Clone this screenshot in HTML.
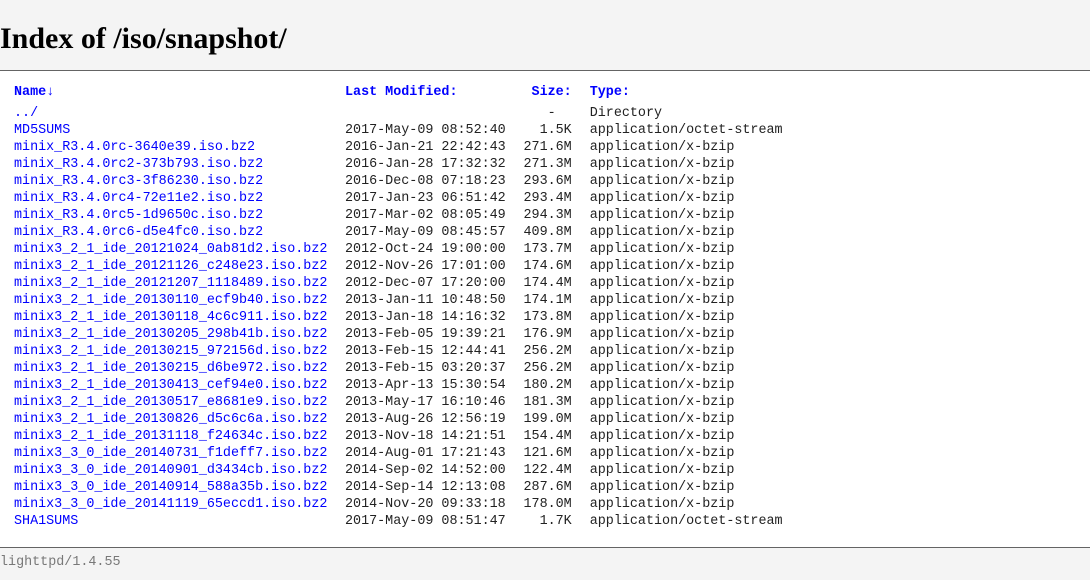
<!DOCTYPE html>
<html><head><meta charset="utf-8"><style>
html,body{margin:0;padding:0;background:#f4f4f4;width:1090px;height:580px;overflow:hidden}
h1{position:absolute;left:0;top:19px;margin:0;font:bold 30px/40px "Liberation Serif",serif;color:#000;white-space:nowrap}
.list{position:absolute;left:0;top:70px;width:1090px;height:476px;background:#fff;border-top:1px solid #646464;border-bottom:1px solid #646464}
table{position:absolute;left:14px;top:13px;border-collapse:collapse}
th,td{font:13.4px/17px "Liberation Mono",monospace;padding:0;text-align:left;white-space:nowrap;color:#222}
th{font-weight:bold;color:blue;padding-bottom:4px}
a{color:blue;text-decoration:none}
.n{width:331px}.m{width:160px}.s{width:66px;text-align:right}.t{padding-left:18px}
.foot{position:absolute;left:0;top:554px;font:13.4px/17px "Liberation Mono",monospace;color:#787878}
</style></head><body>
<h1>Index of /iso/snapshot/</h1>
<div class="list"><table>
<tr><th class="n">Name↓</th><th class="m">Last Modified:</th><th class="s">Size:</th><th class="t">Type:</th></tr>
<tr><td class="n"><a>../</a></td><td class="m"></td><td class="s">-&nbsp;&nbsp;</td><td class="t">Directory</td></tr>
<tr><td class="n"><a>MD5SUMS</a></td><td class="m">2017-May-09 08:52:40</td><td class="s">1.5K</td><td class="t">application/octet-stream</td></tr>
<tr><td class="n"><a>minix_R3.4.0rc-3640e39.iso.bz2</a></td><td class="m">2016-Jan-21 22:42:43</td><td class="s">271.6M</td><td class="t">application/x-bzip</td></tr>
<tr><td class="n"><a>minix_R3.4.0rc2-373b793.iso.bz2</a></td><td class="m">2016-Jan-28 17:32:32</td><td class="s">271.3M</td><td class="t">application/x-bzip</td></tr>
<tr><td class="n"><a>minix_R3.4.0rc3-3f86230.iso.bz2</a></td><td class="m">2016-Dec-08 07:18:23</td><td class="s">293.6M</td><td class="t">application/x-bzip</td></tr>
<tr><td class="n"><a>minix_R3.4.0rc4-72e11e2.iso.bz2</a></td><td class="m">2017-Jan-23 06:51:42</td><td class="s">293.4M</td><td class="t">application/x-bzip</td></tr>
<tr><td class="n"><a>minix_R3.4.0rc5-1d9650c.iso.bz2</a></td><td class="m">2017-Mar-02 08:05:49</td><td class="s">294.3M</td><td class="t">application/x-bzip</td></tr>
<tr><td class="n"><a>minix_R3.4.0rc6-d5e4fc0.iso.bz2</a></td><td class="m">2017-May-09 08:45:57</td><td class="s">409.8M</td><td class="t">application/x-bzip</td></tr>
<tr><td class="n"><a>minix3_2_1_ide_20121024_0ab81d2.iso.bz2</a></td><td class="m">2012-Oct-24 19:00:00</td><td class="s">173.7M</td><td class="t">application/x-bzip</td></tr>
<tr><td class="n"><a>minix3_2_1_ide_20121126_c248e23.iso.bz2</a></td><td class="m">2012-Nov-26 17:01:00</td><td class="s">174.6M</td><td class="t">application/x-bzip</td></tr>
<tr><td class="n"><a>minix3_2_1_ide_20121207_1118489.iso.bz2</a></td><td class="m">2012-Dec-07 17:20:00</td><td class="s">174.4M</td><td class="t">application/x-bzip</td></tr>
<tr><td class="n"><a>minix3_2_1_ide_20130110_ecf9b40.iso.bz2</a></td><td class="m">2013-Jan-11 10:48:50</td><td class="s">174.1M</td><td class="t">application/x-bzip</td></tr>
<tr><td class="n"><a>minix3_2_1_ide_20130118_4c6c911.iso.bz2</a></td><td class="m">2013-Jan-18 14:16:32</td><td class="s">173.8M</td><td class="t">application/x-bzip</td></tr>
<tr><td class="n"><a>minix3_2_1_ide_20130205_298b41b.iso.bz2</a></td><td class="m">2013-Feb-05 19:39:21</td><td class="s">176.9M</td><td class="t">application/x-bzip</td></tr>
<tr><td class="n"><a>minix3_2_1_ide_20130215_972156d.iso.bz2</a></td><td class="m">2013-Feb-15 12:44:41</td><td class="s">256.2M</td><td class="t">application/x-bzip</td></tr>
<tr><td class="n"><a>minix3_2_1_ide_20130215_d6be972.iso.bz2</a></td><td class="m">2013-Feb-15 03:20:37</td><td class="s">256.2M</td><td class="t">application/x-bzip</td></tr>
<tr><td class="n"><a>minix3_2_1_ide_20130413_cef94e0.iso.bz2</a></td><td class="m">2013-Apr-13 15:30:54</td><td class="s">180.2M</td><td class="t">application/x-bzip</td></tr>
<tr><td class="n"><a>minix3_2_1_ide_20130517_e8681e9.iso.bz2</a></td><td class="m">2013-May-17 16:10:46</td><td class="s">181.3M</td><td class="t">application/x-bzip</td></tr>
<tr><td class="n"><a>minix3_2_1_ide_20130826_d5c6c6a.iso.bz2</a></td><td class="m">2013-Aug-26 12:56:19</td><td class="s">199.0M</td><td class="t">application/x-bzip</td></tr>
<tr><td class="n"><a>minix3_2_1_ide_20131118_f24634c.iso.bz2</a></td><td class="m">2013-Nov-18 14:21:51</td><td class="s">154.4M</td><td class="t">application/x-bzip</td></tr>
<tr><td class="n"><a>minix3_3_0_ide_20140731_f1deff7.iso.bz2</a></td><td class="m">2014-Aug-01 17:21:43</td><td class="s">121.6M</td><td class="t">application/x-bzip</td></tr>
<tr><td class="n"><a>minix3_3_0_ide_20140901_d3434cb.iso.bz2</a></td><td class="m">2014-Sep-02 14:52:00</td><td class="s">122.4M</td><td class="t">application/x-bzip</td></tr>
<tr><td class="n"><a>minix3_3_0_ide_20140914_588a35b.iso.bz2</a></td><td class="m">2014-Sep-14 12:13:08</td><td class="s">287.6M</td><td class="t">application/x-bzip</td></tr>
<tr><td class="n"><a>minix3_3_0_ide_20141119_65eccd1.iso.bz2</a></td><td class="m">2014-Nov-20 09:33:18</td><td class="s">178.0M</td><td class="t">application/x-bzip</td></tr>
<tr><td class="n"><a>SHA1SUMS</a></td><td class="m">2017-May-09 08:51:47</td><td class="s">1.7K</td><td class="t">application/octet-stream</td></tr>
</table></div>
<div class="foot">lighttpd/1.4.55</div>
</body></html>
